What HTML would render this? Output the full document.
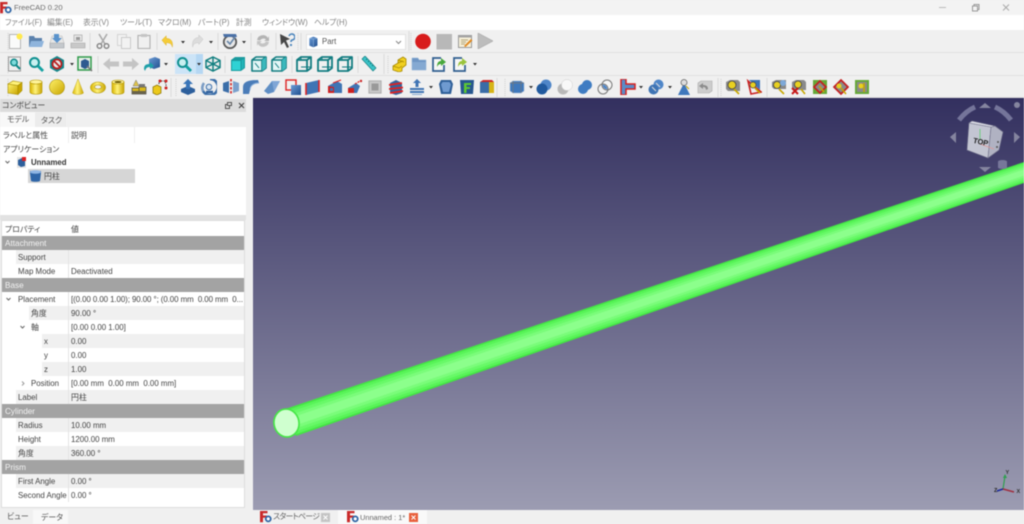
<!DOCTYPE html>
<html><head><meta charset="utf-8"><title>FreeCAD 0.20</title>
<style>
*{box-sizing:border-box}
html,body{margin:0;padding:0;width:1024px;height:524px;overflow:hidden;background:#f0f0f0}
#w{position:relative;width:1024px;height:524px;overflow:hidden;font-family:"Liberation Sans","Noto Sans CJK JP",sans-serif;font-size:7.9px;color:#444;filter:blur(.4px);font-feature-settings:"palt"}
.a{position:absolute}
.t{position:absolute;white-space:pre;line-height:12px;height:12px}
.m{top:17px;color:#858585;font-size:7.8px}
.r{position:absolute;left:2px;width:242px;height:14px}
.g{background:#a3a3a3;color:#f2f2f2;padding-left:3px;line-height:15px;font-size:8.2px}
.l{position:absolute;top:0;height:14px;line-height:15px;padding-left:2px;white-space:pre}
.v{position:absolute;left:66px;width:176px;top:0;height:14px;line-height:15px;padding-left:2px;white-space:pre;border-left:1px solid #e4e4e4;overflow:hidden}
.s{background:#f0f0f0}.w{background:#fff}
svg{position:absolute;left:0;top:0}
</style></head><body><div id="w">

<div class="a" style="left:0;top:0;width:1024px;height:15px;background:#f3f3f3"></div>
<div class="a" style="left:0;top:15px;width:1024px;height:15px;background:#fff"></div>
<div class="a" style="left:0;top:30px;width:1024px;height:22px;background:#f0f0f0"></div>
<div class="a" style="left:0;top:52px;width:1024px;height:1px;background:#e0e0e0"></div>
<div class="a" style="left:0;top:75px;width:1024px;height:1px;background:#e0e0e0"></div>
<div class="a" style="left:175px;top:54px;width:28px;height:20px;background:#cce4f7"></div>
<div class="a" style="left:196px;top:54px;width:7px;height:20px;background:#b5d7f3"></div>

<div class="t" style="left:14px;top:2px;color:#6e6e6e;font-size:7.6px">FreeCAD 0.20</div>
<div class="t m" style="left:5px">ファイル(F)</div>
<div class="t m" style="left:47px">編集(E)</div>
<div class="t m" style="left:83px">表示(V)</div>
<div class="t m" style="left:120px">ツール(T)</div>
<div class="t m" style="left:158px">マクロ(M)</div>
<div class="t m" style="left:198px">パート(P)</div>
<div class="t m" style="left:236px">計測</div>
<div class="t m" style="left:262px">ウィンドウ(W)</div>
<div class="t m" style="left:314px">ヘルプ(H)</div>

<div class="a" style="left:306px;top:34px;width:100px;height:16px;background:#fff;border:1px solid #e2e2e2"></div>
<div class="t" style="left:322px;top:36px;font-size:7.8px;color:#555">Part</div>

<!-- viewport -->
<div class="a" style="left:253px;top:98px;width:771px;height:412px;background:linear-gradient(#33305f,#9c9cb2)"></div>
<div class="a" style="left:0;top:97px;width:253px;height:427px;background:#f0f0f0"></div>
<div class="a" style="left:253px;top:97px;width:771px;height:1px;background:#ddd"></div>

<!-- combo -->
<div class="a" style="left:0;top:99px;width:246px;height:13px;background:#dcdcdc"></div>
<div class="t" style="left:2px;top:100px;font-size:7.8px;color:#444">コンボビュー</div>
<div class="a" style="left:0;top:112px;width:35px;height:15px;background:#f8f8f8"></div>
<div class="a" style="left:35px;top:113px;width:31px;height:14px;background:#ececec"></div>
<div class="t" style="left:7px;top:114px;color:#555">モデル</div>
<div class="t" style="left:41px;top:115px;color:#555">タスク</div>
<div class="a" style="left:0;top:127px;width:246px;height:88px;background:#fff"></div>
<div class="a" style="left:0;top:215px;width:246px;height:5px;background:#e2e2e2"></div>
<div class="a" style="left:68px;top:127px;width:1px;height:16px;background:#eee"></div>
<div class="a" style="left:134px;top:127px;width:1px;height:16px;background:#eee"></div>
<div class="t" style="left:3px;top:130px">ラベルと属性</div>
<div class="t" style="left:71px;top:130px">説明</div>
<div class="t" style="left:3px;top:144px">アプリケーション</div>
<div class="t" style="left:31px;top:157px;font-weight:bold;font-size:7.8px;color:#333">Unnamed</div>
<div class="a" style="left:28px;top:169px;width:107px;height:14px;background:#d6d6d6"></div>
<div class="t" style="left:44px;top:171px">円柱</div>

<!-- property panel -->
<div class="a" style="left:1px;top:220px;width:244px;height:288px;background:#fff;border:1px solid #ddd"></div>
<div class="t" style="left:5px;top:224px">プロパティ</div>
<div class="t" style="left:71px;top:224px">値</div>
<div class="r g" style="top:236px">Attachment</div>
<div class="r" style="top:250px"><div class="l s" style="left:14px;width:52px">Support</div><div class="v s"></div></div>
<div class="r" style="top:264px"><div class="l w" style="left:14px;width:52px">Map Mode</div><div class="v w">Deactivated</div></div>
<div class="r g" style="top:278px">Base</div>
<div class="r" style="top:292px"><div class="l w" style="left:14px;width:52px">Placement</div><div class="v w" style="letter-spacing:-.07px">[(0.00 0.00 1.00); 90.00 °; (0.00 mm  0.00 mm  0...</div></div>
<div class="r" style="top:306px"><div class="l s" style="left:27px;width:39px">角度</div><div class="v s">90.00 °</div></div>
<div class="r" style="top:320px"><div class="l w" style="left:27px;width:39px">軸</div><div class="v w">[0.00 0.00 1.00]</div></div>
<div class="r" style="top:334px"><div class="l s" style="left:40px;width:26px">x</div><div class="v s">0.00</div></div>
<div class="r" style="top:348px"><div class="l w" style="left:40px;width:26px">y</div><div class="v w">0.00</div></div>
<div class="r" style="top:362px"><div class="l s" style="left:40px;width:26px">z</div><div class="v s">1.00</div></div>
<div class="r" style="top:376px"><div class="l w" style="left:27px;width:39px">Position</div><div class="v w">[0.00 mm  0.00 mm  0.00 mm]</div></div>
<div class="r" style="top:390px"><div class="l s" style="left:14px;width:52px">Label</div><div class="v s">円柱</div></div>
<div class="r g" style="top:404px">Cylinder</div>
<div class="r" style="top:418px"><div class="l s" style="left:14px;width:52px">Radius</div><div class="v s">10.00 mm</div></div>
<div class="r" style="top:432px"><div class="l w" style="left:14px;width:52px">Height</div><div class="v w">1200.00 mm</div></div>
<div class="r" style="top:446px"><div class="l s" style="left:14px;width:52px">角度</div><div class="v s">360.00 °</div></div>
<div class="r g" style="top:460px">Prism</div>
<div class="r" style="top:474px"><div class="l s" style="left:14px;width:52px">First Angle</div><div class="v s">0.00 °</div></div>
<div class="r" style="top:488px"><div class="l w" style="left:14px;width:52px">Second Angle</div><div class="v w">0.00 °</div></div>

<!-- bottom tabs -->
<div class="a" style="left:33px;top:510px;width:35px;height:14px;background:#f8f8f8"></div>
<div class="t" style="left:7px;top:511px;color:#555">ビュー</div>
<div class="t" style="left:41px;top:512px;color:#555">データ</div>
<div class="a" style="left:338px;top:510px;width:89px;height:14px;background:#f9f9f9"></div>
<div class="t" style="left:273px;top:511px;color:#666;letter-spacing:-.7px">スタートページ</div>
<div class="t" style="left:360px;top:512px;color:#666;font-size:7.4px">Unnamed : 1*</div>

<svg width="1024" height="524" viewBox="0 0 1024 524" xmlns="http://www.w3.org/2000/svg">
<defs>
<linearGradient id="yl" x1="0" y1="0" x2="1" y2="1"><stop offset="0" stop-color="#fff26a"/><stop offset="1" stop-color="#c8a400"/></linearGradient>
<linearGradient id="yh" x1="0" y1="0" x2="1" y2="0"><stop offset="0" stop-color="#d8b400"/><stop offset=".45" stop-color="#fff27a"/><stop offset="1" stop-color="#c8a400"/></linearGradient>
<linearGradient id="bl" x1="0" y1="0" x2="1" y2="1"><stop offset="0" stop-color="#6b9bd6"/><stop offset="1" stop-color="#204f8e"/></linearGradient>

<symbol id="new" viewBox="0 0 16 16"><rect x="2.5" y="1.5" width="11" height="14" fill="#fafafa" stroke="#b5b5b5"/><circle cx="12.5" cy="3.5" r="3" fill="#ffe94d"/></symbol>
<symbol id="open" viewBox="0 0 16 16"><path d="M1 3h5l1 2h7v9H1z" fill="#5c82ad"/><path d="M1 14l2-6h13l-2 6z" fill="#8fb4dc"/></symbol>
<symbol id="save" viewBox="0 0 16 16"><path d="M1 10h14v5H1z" fill="#c4c8cc" stroke="#9aa0a6" stroke-width=".6"/><path d="M3 3h10l2 7H1z" fill="#e6e6e6" stroke="#b5b5b5" stroke-width=".5"/><path d="M5 1h5v4h3l-5 5-5-5h2z" fill="#5a93cc"/></symbol>
<symbol id="sas" viewBox="0 0 16 16"><path d="M1 10h14v5H1z" fill="#c8c8c8" stroke="#a5a5a5" stroke-width=".6"/><path d="M4 2h8v6H4z" fill="#e8e8e8" stroke="#aaa" stroke-width=".7"/><path d="M6 4h4v3H6z" fill="#999"/></symbol>
<symbol id="cut" viewBox="0 0 16 16"><path d="M4 1l6 10M12 1L6 11" stroke="#a8a8a8" stroke-width="1.500" fill="none"/><circle cx="4.500" cy="13" r="2.300" fill="none" stroke="#828282" stroke-width="1.400"/><circle cx="11.500" cy="13" r="2.300" fill="none" stroke="#828282" stroke-width="1.400"/></symbol>
<symbol id="cop" viewBox="0 0 16 16"><rect x="1.500" y="1.500" width="9" height="11" fill="#f2f2f2" stroke="#d4d4d4"/><rect x="5.500" y="4.500" width="9" height="11" fill="#f2f2f2" stroke="#cacaca"/></symbol>
<symbol id="pas" viewBox="0 0 16 16"><rect x="2" y="2.500" width="12" height="13" fill="#f0f0f0" stroke="#b4b4b4" stroke-width="1.200"/><rect x="5" y="1" width="6" height="3" fill="#c4c4c4"/></symbol>
<symbol id="und" viewBox="0 0 16 16"><path d="M1 7l5-5v3c5 0 8 3 7 10-1-4-3-5-7-5v3z" fill="#f5cc38" stroke="#d8ae22" stroke-width=".5"/></symbol>
<symbol id="red" viewBox="0 0 16 16"><path d="M15 6l-5-5v3C5 4 2 8 3 15c1-4 3-5 7-5v2z" fill="#dcdcdc" stroke="#c4c4c4" stroke-width=".5"/></symbol>
<symbol id="wb" viewBox="0 0 16 16"><circle cx="8" cy="9" r="6.200" fill="#e8e8e8" stroke="#5a5a5a" stroke-width="1.800"/><path d="M1 1h13l1 3H2z" fill="#4a70a6"/><path d="M5 8l3 3 5-7" fill="none" stroke="#6a88aa" stroke-width="1.700"/></symbol>
<symbol id="rf" viewBox="0 0 16 16"><path d="M2 7a6 6 0 0 1 11-2l1-2v5h-5l2-1.500a4 4 0 0 0-6 1z" fill="#b4b4b4"/><path d="M14 9a6 6 0 0 1-11 2l-1 2V8h5L5 9.500a4 4 0 0 0 6-1z" fill="#c4c4c4"/></symbol>
<symbol id="wt" viewBox="0 0 16 16"><path d="M1 1l10 5-4 1.500L10 14l-2 1-3-6-3 3z" fill="#464646"/><path d="M10 3a3 3 0 1 1 3 4c-1 .5-1 1-1 2" fill="none" stroke="#4a84bc" stroke-width="1.600"/><circle cx="12" cy="12" r="1.100" fill="#4a84bc"/></symbol>
<symbol id="prt" viewBox="0 0 16 16"><path d="M1 4l5-2 5 2v9l-5 2-5-2z" fill="url(#bl)"/><path d="M6 5v10M1 4l5 1 5-1" stroke="#aed0f0" stroke-width=".5" fill="none"/></symbol>
<symbol id="edt" viewBox="0 0 16 16"><rect x="1.500" y="2.500" width="13" height="12" fill="#f6efd8" stroke="#999"/><path d="M1.500 2.500h13v2h-13z" fill="#a4a4a4"/><path d="M4 7h7M4 9h5M4 11h4" stroke="#b3a57a"/><path d="M7 13l7-7 1.500 1.500-7 6.500z" fill="#e08a22"/></symbol>
<symbol id="ply" viewBox="0 0 16 16"><path d="M1 0l15 8-15 8z" fill="#bdbdbd" stroke="#a9a9a9" stroke-width=".6"/></symbol>

<symbol id="fit" viewBox="0 0 16 16"><rect x="1.500" y="1" width="12" height="14" fill="#eee" stroke="#9a9a9a"/><circle cx="7" cy="6.500" r="3.200" fill="#7fdcdc" stroke="#0f8888" stroke-width="1.500"/><path d="M9 9l4 4" stroke="#0f8888" stroke-width="2"/></symbol>
<symbol id="zm" viewBox="0 0 16 16"><circle cx="6.500" cy="6.500" r="4.500" fill="#c8f0f0" stroke="#0f9090" stroke-width="2"/><path d="M10 10l5 5" stroke="#12a0a0" stroke-width="2.800"/></symbol>
<symbol id="no" viewBox="0 0 16 16"><path d="M8 0l7 4v8l-7 4-7-4V4z" fill="#17878c"/><circle cx="8" cy="8" r="4.500" fill="#e8e8e8" stroke="#b82020" stroke-width="1.800"/><path d="M5 5l6 6" stroke="#b82020" stroke-width="1.800"/></symbol>
<symbol id="sel" viewBox="0 0 16 16"><rect x="1" y="1" width="13" height="13" fill="#e8f0e8" stroke="#2f9a4a" stroke-width="1.500"/><path d="M4 5l4-2 4 2v6l-4 2-4-2z" fill="#2e5a90"/><path d="M10 10l5 5" stroke="#777" stroke-width="1.500"/></symbol>
<symbol id="bk" viewBox="0 0 16 16"><path d="M0 8l7-6v3.500h9v5H7V14z" fill="#c4c4c4"/></symbol>
<symbol id="fw" viewBox="0 0 16 16"><path d="M16 8L9 2v3.500H0v5h9V14z" fill="#c4c4c4"/></symbol>
<symbol id="std" viewBox="0 0 16 16"><path d="M5 3l6-2 5 2v8l-6 2-5-2z" fill="url(#bl)"/><path d="M0 13c0-4 2-5 6-5V6l4 4-4 3v-2c-3 0-4 1-5 4z" fill="#1fa0a8"/></symbol>
<symbol id="iso" viewBox="0 0 16 16"><g fill="none" stroke="#137f80" stroke-width="1.500"><path d="M8 1l7 3.500v7L8 15l-7-3.500v-7z"/><path d="M1 4.500L8 8l7-3.500M8 8v7M8 1v7M1 11.500L8 8l7 3.500"/></g></symbol>
<symbol id="cf" viewBox="0 0 16 16"><path d="M1 4l4-3h10v11l-4 3H1z" fill="#1a9a9e"/><path d="M2 5h8.500v9H2z" fill="#2fd2d4"/><path d="M11.500 4.500l2.500-2v9l-2.500 2z" fill="#22b4b8"/></symbol>
<symbol id="ct" viewBox="0 0 16 16"><path d="M1 4l4-3h10v11l-4 3H1z" fill="#e4f6f6" stroke="#127c80" stroke-width="1.600" stroke-linejoin="round"/><path d="M1 4h10v11M11 4l4-3" fill="none" stroke="#127c80" stroke-width="1.600"/><path d="M11 4l4-3v11l-4 3z" fill="#3ab8bc"/><path d="M4 7l4 5" stroke="#127c80"/></symbol>
<symbol id="cw" viewBox="0 0 16 16"><g fill="none" stroke="#127c80" stroke-width="1.800" stroke-linejoin="round"><path d="M1 4l4-3h10v11l-4 3H1z"/><path d="M1 4h10v11M11 4l4-3"/><path d="M5 1v3M5 11h10M1 15" stroke-width="1"/></g></symbol>
<symbol id="ms" viewBox="0 0 16 16"><path d="M4 0l11 12-3 3L1 3z" fill="#3cc4c8" stroke="#127c80" stroke-width=".7"/><path d="M5 4l1-1M7 6l1-1M9 8l1-1M11 10l1-1" stroke="#127c80"/></symbol>
<symbol id="pt" viewBox="0 0 16 16"><path d="M2 10l5-3v-3l5-3 3 2v6l-4 3v3l-3 1-6-2z" fill="#f0cf20" stroke="#a88a00" stroke-width=".8"/><path d="M2 10l6 2 3-2M7 7l5-2M7 4l6 2" stroke="#a88a00" stroke-width=".7" fill="none"/></symbol>
<symbol id="fd" viewBox="0 0 16 16"><path d="M1 2h6l1 2h7v10H1z" fill="#6f96c4" stroke="#8eb0d4" stroke-width=".5"/><path d="M1 6h14v8H1z" fill="#85a9d2"/></symbol>
<symbol id="lk" viewBox="0 0 16 16"><path d="M10 2H2v13h11V9" fill="#f6f6f6" stroke="#2f5e8f" stroke-width="1.700"/><path d="M6 11c0-5 2-6 4-6V2l5 4-5 4V8c-2 0-3 1-4 3z" fill="#48a83c"/></symbol>
<symbol id="lk2" viewBox="0 0 16 16"><path d="M10 2H2v13h11V9" fill="#f6f6f6" stroke="#2f5e8f" stroke-width="1.700"/><path d="M6 11c0-5 2-6 4-6V2l5 4-5 4V8c-2 0-3 1-4 3z" fill="#9ac43c"/></symbol>

<symbol id="ybx" viewBox="0 0 16 16"><path d="M1 5v9l10 1.500V6.500z" fill="url(#yl)" stroke="#a98e00" stroke-width=".6"/><path d="M1 5l5-3 9 1.500-4 3z" fill="#fff27a" stroke="#a98e00" stroke-width=".6"/><path d="M11 6.500l4-3v8l-4 4z" fill="#c9a700" stroke="#a98e00" stroke-width=".6"/></symbol>
<symbol id="ycy" viewBox="0 0 16 16"><path d="M2 3v10c0 3 12 3 12 0V3z" fill="url(#yh)" stroke="#b49700" stroke-width=".6"/><ellipse cx="8" cy="3" rx="6" ry="2" fill="#fff49a" stroke="#b49700" stroke-width=".6"/></symbol>
<symbol id="ysp" viewBox="0 0 16 16"><circle cx="8" cy="8" r="7.500" fill="url(#yl)" stroke="#a98e00" stroke-width=".6"/></symbol>
<symbol id="yco" viewBox="0 0 16 16"><path d="M8 0l5.500 14c-2 2-9 2-11 0z" fill="url(#yh)" stroke="#b49700" stroke-width=".4"/></symbol>
<symbol id="yto" viewBox="0 0 16 16"><ellipse cx="8" cy="8.500" rx="7.500" ry="5.500" fill="url(#yh)" stroke="#b49700" stroke-width=".6"/><ellipse cx="8" cy="8" rx="3.500" ry="2" fill="#f0f0f0" stroke="#a98e00" stroke-width=".6"/></symbol>
<symbol id="ytb" viewBox="0 0 16 16"><path d="M2 3v10c0 3 12 3 12 0V3z" fill="url(#yh)" stroke="#b49700" stroke-width=".6"/><ellipse cx="8" cy="3" rx="6" ry="2" fill="#fff49a" stroke="#b49700" stroke-width=".6"/><ellipse cx="8" cy="3" rx="3.500" ry="1" fill="#6b5a00"/></symbol>
<symbol id="ybd" viewBox="0 0 16 16"><path d="M1 9h7v6H1zM8 8h7v7H8z" fill="#d9b81c" stroke="#444" stroke-width=".7"/><path d="M5 1l3 6H2z" fill="#dcc24a" stroke="#777" stroke-width=".5"/><rect x="8" y="5" width="6" height="3" fill="#777"/><rect x="1" y="12" width="14" height="3" fill="#68624a"/></symbol>
<symbol id="ybb" viewBox="0 0 16 16"><path d="M1 8l4-2 4 2v6l-4 2-4-2z" fill="#ecc91c" stroke="#8b7300" stroke-width=".7"/><path d="M7 5V2h6l2 8" fill="none" stroke="#444" stroke-dasharray="1.500 1"/><circle cx="8" cy="2" r="1.500" fill="#c22"/><circle cx="14" cy="2" r="1.500" fill="#c22"/><circle cx="14" cy="9" r="1.500" fill="#c22"/></symbol>

<symbol id="ext" viewBox="0 0 16 16"><path d="M1 10l7-3 7 3v3l-7 3-7-3z" fill="#2d5f9c"/><path d="M8 0l5 5h-3v5H6V5H3z" fill="#3a75b8"/></symbol>
<symbol id="rev" viewBox="0 0 16 16"><path d="M9 0a8 8 0 1 1-7 12" fill="none" stroke="#3b6ea8" stroke-width="2.600"/><path d="M3 4a8 8 0 0 0-1 8" fill="none" stroke="#7a9cc4" stroke-width="2.600"/><circle cx="8" cy="8" r="2.800" fill="#d8e4f2" stroke="#3b6ea8"/><path d="M5 13h7" stroke="#2d5f9c" stroke-width="2.500"/></symbol>
<symbol id="mir" viewBox="0 0 16 16"><path d="M0 4l6-2v12l-6-2z" fill="#3b6ea8"/><path d="M16 4l-6-2v12l6-2z" fill="#7ba0cc"/><path d="M8 0v16" stroke="#d02020" stroke-width="1.600" stroke-dasharray="2.500 1.500"/></symbol>
<symbol id="fil" viewBox="0 0 16 16"><path d="M0 15V8C0 3 5 1 15 1l1 3c-6 0-9 3-9 7l-1 4z" fill="#4a7cb8"/><path d="M7 11c0-4 3-7 9-7" stroke="#89aedb" fill="none"/></symbol>
<symbol id="cha" viewBox="0 0 16 16"><path d="M0 12L8 2h8l-6 11-6 2z" fill="#5f8ec4"/><path d="M8 2h8l-6 11z" fill="#80a6d6"/></symbol>
<symbol id="sec" viewBox="0 0 16 16"><rect x="1" y="1" width="10" height="10" fill="#f0f0f0" stroke="#d22" stroke-width="1.400"/><rect x="6" y="6" width="10" height="10" fill="url(#bl)"/></symbol>
<symbol id="crs" viewBox="0 0 16 16"><path d="M1 4l13-3v12L1 16z" fill="#3f74b4"/><path d="M1 4v12M14 1v12" stroke="#d22" stroke-width="1.600"/></symbol>
<symbol id="lft" viewBox="0 0 16 16"><path d="M1 7l9-5 5 3v9H4l-3-2z" fill="#3f74b4"/><path d="M1 7v7h6V8z" fill="#cc2020"/><rect x="3" y="9" width="3" height="3" fill="#3f74b4"/><path d="M6 4l8-3" stroke="#d22" stroke-width="1.200"/></symbol>
<symbol id="swp" viewBox="0 0 16 16"><path d="M1 9l8-5 4 3-3 7H3z" fill="#3f74b4"/><path d="M1 9v5h6V9z" fill="#cc2020"/><path d="M8 5l5-3" stroke="#d22" stroke-dasharray="2 1" stroke-width="1.200"/><circle cx="14" cy="2" r="1.200" fill="#c22"/></symbol>
<symbol id="cmp" viewBox="0 0 16 16"><rect x="1" y="1" width="14" height="14" fill="#c8c8c8" stroke="#aaa"/><rect x="4" y="4" width="8" height="8" fill="#999"/></symbol>
<symbol id="slc" viewBox="0 0 16 16"><path d="M2 4l6-3 6 3v10l-6 2-6-2z" fill="#34639c"/><path d="M1 6l13-2M1 10l14-1.500M2 14l13-2" stroke="#e12020" stroke-width="1.800"/></symbol>
<symbol id="ofs" viewBox="0 0 16 16"><path d="M8 0l4 4H9.500v4h-3V4H4z" fill="#3f74b4"/><path d="M1 10h14M1 13h14" stroke="#3f74b4" stroke-width="2"/><path d="M3 15.500h10" stroke="#86a8d0" stroke-width="1"/></symbol>
<symbol id="thk" viewBox="0 0 16 16"><path d="M3 1h10l2 4-2 10H3L1 5z" fill="#2f5f98"/><path d="M4.500 3h7l1.500 2.500L11 13H5L3 5.500z" fill="#6f9ad0"/></symbol>
<symbol id="ftr" viewBox="0 0 16 16"><path d="M1 1h14l-1 14H2z" fill="#26568e"/><path d="M5 4h7v2H7.500v2H11v2H7.500v4H5z" fill="#5cc832"/></symbol>
<symbol id="ocl" viewBox="0 0 16 16"><path d="M1 3h14v11H1z" fill="#d6b416"/><path d="M1 3h9v11H1z" fill="#3a6ca6"/><path d="M1 3l3-2h9l2 2z" fill="#cc2525"/></symbol>
<symbol id="com" viewBox="0 0 16 16"><path d="M1 4l3-2h8l3 2v8l-3 2H4l-3-2z" fill="#3f78bc" stroke="#9fb8d4" stroke-width=".6"/><path d="M1 4h14M4 2v12M12 2v12" stroke="#777" stroke-width=".7" fill="none"/></symbol>
<symbol id="bc" viewBox="0 0 16 16"><circle cx="10" cy="6" r="5.500" fill="#4f86c8"/><circle cx="6" cy="10" r="5.500" fill="#215a9e"/></symbol>
<symbol id="bd" viewBox="0 0 16 16"><circle cx="6" cy="10" r="5.500" fill="#b8b8b8"/><circle cx="10" cy="6" r="5.500" fill="#f8f8f8" stroke="#ccc" stroke-width=".5"/></symbol>
<symbol id="bu" viewBox="0 0 16 16"><path d="M2 8l6-6a5.500 5.500 0 0 1 6 6l-6 6a5.500 5.500 0 0 1-6-6z" fill="#3f7cc2"/><circle cx="10" cy="6" r="5" fill="#3f7cc2"/><circle cx="6" cy="10" r="5" fill="#3f7cc2"/></symbol>
<symbol id="bi" viewBox="0 0 16 16"><circle cx="10" cy="6" r="5" fill="#f6f6f6" stroke="#777"/><circle cx="6" cy="10" r="5" fill="none" stroke="#777"/><path d="M5.500 5.500a5 5 0 0 1 5 5 5 5 0 0 1-5-5z" fill="#4f86c8"/></symbol>
<symbol id="jc" viewBox="0 0 16 16"><path d="M1 0h5v5h9v5H6v6H1z" fill="#5a8cc8" stroke="#d42020" stroke-width="1.500"/></symbol>
<symbol id="sp" viewBox="0 0 16 16"><circle cx="10.500" cy="5.500" r="5" fill="#4f86c8"/><circle cx="5.500" cy="10.500" r="5" fill="#3f74b4"/><path d="M4 8l4 4M8 4l4 4" stroke="#ddd"/></symbol>
<symbol id="cf2" viewBox="0 0 16 16"><path d="M8 4l6 12H2z" fill="#3f78bc"/><circle cx="8" cy="3.500" r="3" fill="#ddd" stroke="#666" stroke-width=".8"/><path d="M10 7l3 3" stroke="#c9a700"/></symbol>
<symbol id="dfm" viewBox="0 0 16 16"><path d="M1 4l3-2h11v10l-3 2H1z" fill="#cdcdcd" stroke="#aaa" stroke-width=".6"/><path d="M11 10c0-3-2-4-5-4V4L2 7l4 3V8c2 0 3 1 3 3z" fill="#8c8c8c"/></symbol>

<symbol id="m1" viewBox="0 0 16 16"><path d="M1 3l4-2h8l2 2v9H3l-2-2z" fill="#8a8a8a"/><circle cx="7" cy="6" r="4" fill="#e8d020" stroke="#444" stroke-width=".8"/><path d="M9 10l5 5" stroke="#c7a700" stroke-width="1.600"/></symbol>
<symbol id="m2" viewBox="0 0 16 16"><path d="M3 1h11v10z" fill="#3f74b4"/><path d="M2 2l3 13 10-2z" fill="none" stroke="#c82020" stroke-width="1.600"/><circle cx="7" cy="6" r="3" fill="#e8d020" stroke="#444" stroke-width=".7"/><path d="M9 9l5 5" stroke="#c7a700" stroke-width="1.600"/></symbol>
<symbol id="m3" viewBox="0 0 16 16"><path d="M1 3l4-2h10v9H3l-2-2z" fill="#888"/><circle cx="6" cy="6" r="3.500" fill="#e8d020" stroke="#444" stroke-width=".8"/><circle cx="12" cy="4" r="3" fill="#7da8d8"/><path d="M8 10l5 5" stroke="#c7a700" stroke-width="1.600"/></symbol>
<symbol id="m4" viewBox="0 0 16 16"><path d="M1 3l4-2h8l2 2v8H3l-2-2z" fill="#8a8a8a"/><circle cx="7" cy="5.500" r="3.500" fill="#e8d020" stroke="#444" stroke-width=".8"/><path d="M1 9l6 6M7 9l-6 6" stroke="#c51818" stroke-width="2"/><path d="M10 10l4 5" stroke="#c7a700" stroke-width="1.600"/></symbol>
<symbol id="m5" viewBox="0 0 16 16"><rect x="1" y="1" width="14" height="14" fill="#66a838"/><path d="M8 2l6 6-6 6-6-6z" fill="#8a8a8a" stroke="#c32020" stroke-width="1.700"/><path d="M7 7l5 6" stroke="#c7a700" stroke-width="1.500"/></symbol>
<symbol id="m6" viewBox="0 0 16 16"><path d="M8 1l7 7-7 7-7-7z" fill="#8a8a8a" stroke="#c32020" stroke-width="1.700"/><circle cx="6" cy="7" r="2.500" fill="#e8d020"/><path d="M8 9l5 6" stroke="#c7a700" stroke-width="1.500"/></symbol>
<symbol id="m7" viewBox="0 0 16 16"><rect x="1" y="1" width="14" height="14" fill="#66a838"/><rect x="3" y="3" width="10" height="10" fill="#8a8a8a"/><circle cx="7" cy="7" r="2.500" fill="#e8d020"/><path d="M10 4v9" stroke="#c7a700" stroke-width="1.600"/></symbol>
<symbol id="logo" viewBox="0 0 16 16"><path d="M0 0h10v3H4v3h5v3H4v6H0z" fill="#c92a2a"/><circle cx="11" cy="10.500" r="3.300" fill="#fff" stroke="#2f64a4" stroke-width="2.400"/></symbol>
<symbol id="dd" viewBox="0 0 6 4"><path d="M1 1h4L3 3.500z" fill="#333"/></symbol>
</defs>

<!-- 3D cylinder: nested tapered strips for the shading -->
<path d="M285 409L1024 162V183L296 436Z" fill="#45e445"/>
<path d="M285.660 410.620L1024 163.260V181.740L295.340 434.380Z" fill="#58f458"/>
<path d="M286.650 413.050L1024 165.150V179.850L294.350 431.950Z" fill="#68f968"/>
<path d="M287.750 415.750L1024 167.250V177.750L293.250 429.250Z" fill="#7afc7a"/>
<path d="M288.850 418.450L1024 169.350V175.650L292.150 426.550Z" fill="#8cff8c"/>
<ellipse cx="286.500" cy="423" rx="12.500" ry="14" fill="#cfffcf" stroke="#46e646" stroke-width="1.600" transform="rotate(-10 286.500 423)"/>

<!-- nav cube -->
<g>
<path d="M959 120Q966 111 975 107" fill="none" stroke="#75759a" stroke-width="5"/>
<path d="M995 107Q1004 111 1011 120" fill="none" stroke="#75759a" stroke-width="5"/>
<path d="M985 103l-6 5h12zM950 137l6-5v11zM1020 137l-6-5v11zM985 172l-6-5h12z" fill="#85859f"/>
<circle cx="1017" cy="105" r="3" fill="#85859f"/>
<path d="M998 161.500a4.500 1.500 0 0 1 9 0v6a4.500 1.500 0 0 1-9 0z" fill="#77779a"/>
<path d="M969 123L991 127 988 158 967 150Z" fill="#c3c5d2" stroke="#6e6e88" stroke-width=".6"/>
<path d="M991 127L995 126 1003 132 999 150 988 158Z" fill="#b0b2c2" stroke="#6e6e88" stroke-width=".6"/>
<path d="M969 123L972 121 995 126 991 127Z" fill="#d8d9e2" stroke="#6e6e88" stroke-width=".5"/>
<path d="M980 140L980 129" stroke="#5fcf6f" stroke-width=".8"/><path d="M980 144L994 149" stroke="#d99" stroke-width=".8"/>
<circle cx="998" cy="142" r="1" fill="#555"/><circle cx="997" cy="147" r="1" fill="#555"/>
</g>
<text x="973" y="144" font-size="7.500" font-family="Liberation Sans" font-weight="bold" fill="#222" transform="rotate(12 979 142)">TOP</text>

<!-- axis -->
<path d="M1003 489L1005 476" stroke="#2f9f4f" stroke-width="1.200"/><path d="M1005 474l-2 4h4z" fill="#2f9f4f"/>
<path d="M1003 489L997 491" stroke="#1a2a9a" stroke-width="1.500"/>
<path d="M1003 489L1014 492" stroke="#a03040" stroke-width="1.500"/>
<text x="1005.500" y="474" font-size="5.500" font-family="Liberation Sans" font-weight="bold" fill="#333">Y</text>
<text x="994" y="492" font-size="5.500" font-family="Liberation Sans" font-weight="bold" fill="#222">Z</text>
<text x="1016.500" y="493" font-size="5.500" font-family="Liberation Sans" font-weight="bold" fill="#333">X</text>

<!-- title -->
<use href="#logo" x="0" y="2" width="12" height="12"/>
<path d="M939 7.500h7" stroke="#bbb"/>
<rect x="972.500" y="6" width="5" height="5" fill="none" stroke="#999"/><path d="M974 6V4.500h5v5h-1.500" fill="none" stroke="#999"/>
<path d="M1003 4.500l6 6M1009 4.500l-6 6" stroke="#aaa"/>

<!-- toolbar handles & seps -->
<g stroke="#cfcfcf" stroke-dasharray="1 1">
<path d="M8 33v17M8 56v17M8 79v17M176 79v17M298 33v17M411 33v17M388 56v17M505 79v17M721 79v17"/>
</g>
<g stroke="#dadada">
<path d="M90 33v17M157 33v17M218 33v17M251 33v17M276 33v17M301 33v17M409 31v20M98 56v17M225 56v17M292 56v17M358 56v17M384 54v20M171 78v19M497 78v19M718 78v19M767 78v19"/>
</g>

<!-- toolbar 1 -->
<use href="#new" x="7" y="33" width="16" height="16"/>
<use href="#open" x="28" y="33" width="16" height="16"/>
<use href="#save" x="49" y="33" width="16" height="16"/>
<use href="#sas" x="70" y="33" width="16" height="16"/>
<use href="#cut" x="95" y="33" width="16" height="16"/>
<use href="#cop" x="116" y="33" width="16" height="16"/>
<use href="#pas" x="136" y="33" width="16" height="16"/>
<use href="#und" x="161" y="33" width="14" height="16"/>
<use href="#dd" x="180" y="40" width="6" height="4"/>
<use href="#red" x="190" y="33" width="14" height="16"/>
<use href="#dd" x="208" y="40" width="6" height="4"/>
<use href="#wb" x="222" y="33" width="16" height="16"/>
<use href="#dd" x="241" y="40" width="6" height="4"/>
<use href="#rf" x="255" y="33" width="16" height="16"/>
<use href="#wt" x="279" y="33" width="16" height="16"/>
<use href="#prt" x="308" y="35" width="14" height="13"/>
<path d="M396 41l2.500 2.500L401 41" fill="none" stroke="#888"/>
<circle cx="423" cy="41.500" r="7.800" fill="#d81c1c"/>
<rect x="436.500" y="34" width="15.500" height="15.500" fill="#b8b8b8"/>
<use href="#edt" x="457" y="33" width="16" height="16"/>
<use href="#ply" x="477" y="33" width="16" height="16"/>

<!-- toolbar 2 -->
<use href="#fit" x="7" y="56" width="16" height="16"/>
<use href="#zm" x="28" y="56" width="16" height="16"/>
<use href="#no" x="49" y="56" width="16" height="16"/>
<use href="#dd" x="69" y="62" width="6" height="4"/>
<use href="#sel" x="77" y="56" width="16" height="16"/>
<use href="#bk" x="103" y="56" width="16" height="16"/>
<use href="#fw" x="123" y="56" width="16" height="16"/>
<use href="#std" x="144" y="56" width="16" height="16"/>
<use href="#dd" x="163" y="62" width="6" height="4"/>
<use href="#zm" x="176" y="56" width="16" height="16"/>
<use href="#dd" x="196" y="62" width="6" height="4"/>
<use href="#iso" x="205" y="56" width="16" height="16"/>
<use href="#cf" x="230" y="56" width="16" height="16"/>
<use href="#ct" x="251" y="56" width="16" height="16"/>
<use href="#ct" x="271" y="56" width="16" height="16"/>
<use href="#cw" x="296" y="56" width="16" height="16"/>
<use href="#cw" x="317" y="56" width="16" height="16"/>
<use href="#cw" x="337" y="56" width="16" height="16"/>
<use href="#ms" x="361" y="56" width="16" height="16"/>
<use href="#pt" x="391" y="56" width="16" height="16"/>
<use href="#fd" x="411" y="56" width="16" height="16"/>
<use href="#lk" x="431" y="56" width="16" height="16"/>
<use href="#lk2" x="452" y="56" width="16" height="16"/>
<use href="#dd" x="472" y="62" width="6" height="4"/>

<!-- toolbar 3 -->
<use href="#ybx" x="7" y="79" width="16" height="16"/>
<use href="#ycy" x="28" y="79" width="16" height="16"/>
<use href="#ysp" x="49" y="79" width="16" height="16"/>
<use href="#yco" x="70" y="79" width="16" height="16"/>
<use href="#yto" x="90" y="79" width="16" height="16"/>
<use href="#ytb" x="110" y="79" width="16" height="16"/>
<use href="#ybd" x="131" y="79" width="16" height="16"/>
<use href="#ybb" x="152" y="79" width="16" height="16"/>
<use href="#ext" x="180" y="79" width="16" height="16"/>
<use href="#rev" x="201" y="79" width="16" height="16"/>
<use href="#mir" x="223" y="79" width="16" height="16"/>
<use href="#fil" x="243" y="79" width="16" height="16"/>
<use href="#cha" x="264" y="79" width="16" height="16"/>
<use href="#sec" x="285" y="79" width="16" height="16"/>
<use href="#crs" x="305" y="79" width="16" height="16"/>
<use href="#lft" x="327" y="79" width="16" height="16"/>
<use href="#swp" x="347" y="79" width="16" height="16"/>
<use href="#cmp" x="368" y="79" width="14" height="16"/>
<use href="#slc" x="388" y="79" width="16" height="16"/>
<use href="#ofs" x="409" y="79" width="16" height="16"/>
<use href="#dd" x="428" y="85" width="6" height="4"/>
<use href="#thk" x="438" y="79" width="16" height="16"/>
<use href="#ftr" x="459" y="79" width="16" height="16"/>
<use href="#ocl" x="479" y="79" width="16" height="16"/>
<use href="#com" x="509" y="79" width="16" height="16"/>
<use href="#dd" x="528" y="85" width="6" height="4"/>
<use href="#bc" x="536" y="79" width="16" height="16"/>
<use href="#bd" x="557" y="79" width="16" height="16"/>
<use href="#bu" x="577" y="79" width="16" height="16"/>
<use href="#bi" x="597" y="79" width="16" height="16"/>
<use href="#jc" x="620" y="79" width="16" height="16"/>
<use href="#dd" x="638" y="85" width="6" height="4"/>
<use href="#sp" x="648" y="79" width="16" height="16"/>
<use href="#dd" x="667" y="85" width="6" height="4"/>
<use href="#cf2" x="676" y="79" width="16" height="16"/>
<use href="#dfm" x="697" y="79" width="16" height="16"/>
<use href="#m1" x="725" y="79" width="16" height="16"/>
<use href="#m2" x="746" y="79" width="16" height="16"/>
<use href="#m3" x="771" y="79" width="16" height="16"/>
<use href="#m4" x="791" y="79" width="16" height="16"/>
<use href="#m5" x="812" y="79" width="16" height="16"/>
<use href="#m6" x="833" y="79" width="16" height="16"/>
<use href="#m7" x="854" y="79" width="16" height="16"/>

<!-- combo controls -->
<rect x="225.500" y="104.500" width="4" height="4" fill="none" stroke="#555"/><rect x="227.500" y="102.500" width="4" height="3" fill="#dcdcdc" stroke="#555"/>
<path d="M239 103l5 5M244 103l-5 5" stroke="#444" stroke-width="1.200"/>

<!-- tree -->
<path d="M5.500 161l2 2 2-2" fill="none" stroke="#666"/>
<rect x="17" y="157" width="9" height="11" fill="#e4e4e4"/>
<path d="M18 160l4-2 3 2v6l-4 1-3-2z" fill="#2d5f9c"/><rect x="22" y="157" width="4" height="4" fill="#d22"/>
<path d="M30 171h11v2l-1 8c-2 1-7 1-9 0l-1-8z" fill="#2f66a8"/><ellipse cx="35.500" cy="172" rx="5.500" ry="1.800" fill="#8fb6e4"/>

<!-- property chevrons -->
<path d="M6.500 298l2 2 2-2M20.500 326l2 2 2-2" fill="none" stroke="#666"/>
<path d="M22 381.500l2 2-2 2" fill="none" stroke="#999"/>

<!-- tab icons -->
<use href="#logo" x="260" y="511" width="12" height="12"/>
<rect x="321" y="513" width="9" height="9" fill="#c4c4c4"/><path d="M323.500 515.500l4 4M327.500 515.500l-4 4" stroke="#fff"/>
<use href="#logo" x="347" y="511" width="12" height="12"/>
<rect x="409" y="513" width="9" height="9" fill="#e8603c"/><path d="M411.500 515.500l4 4M415.500 515.500l-4 4" stroke="#fff"/>
</svg>
</div></body></html>
